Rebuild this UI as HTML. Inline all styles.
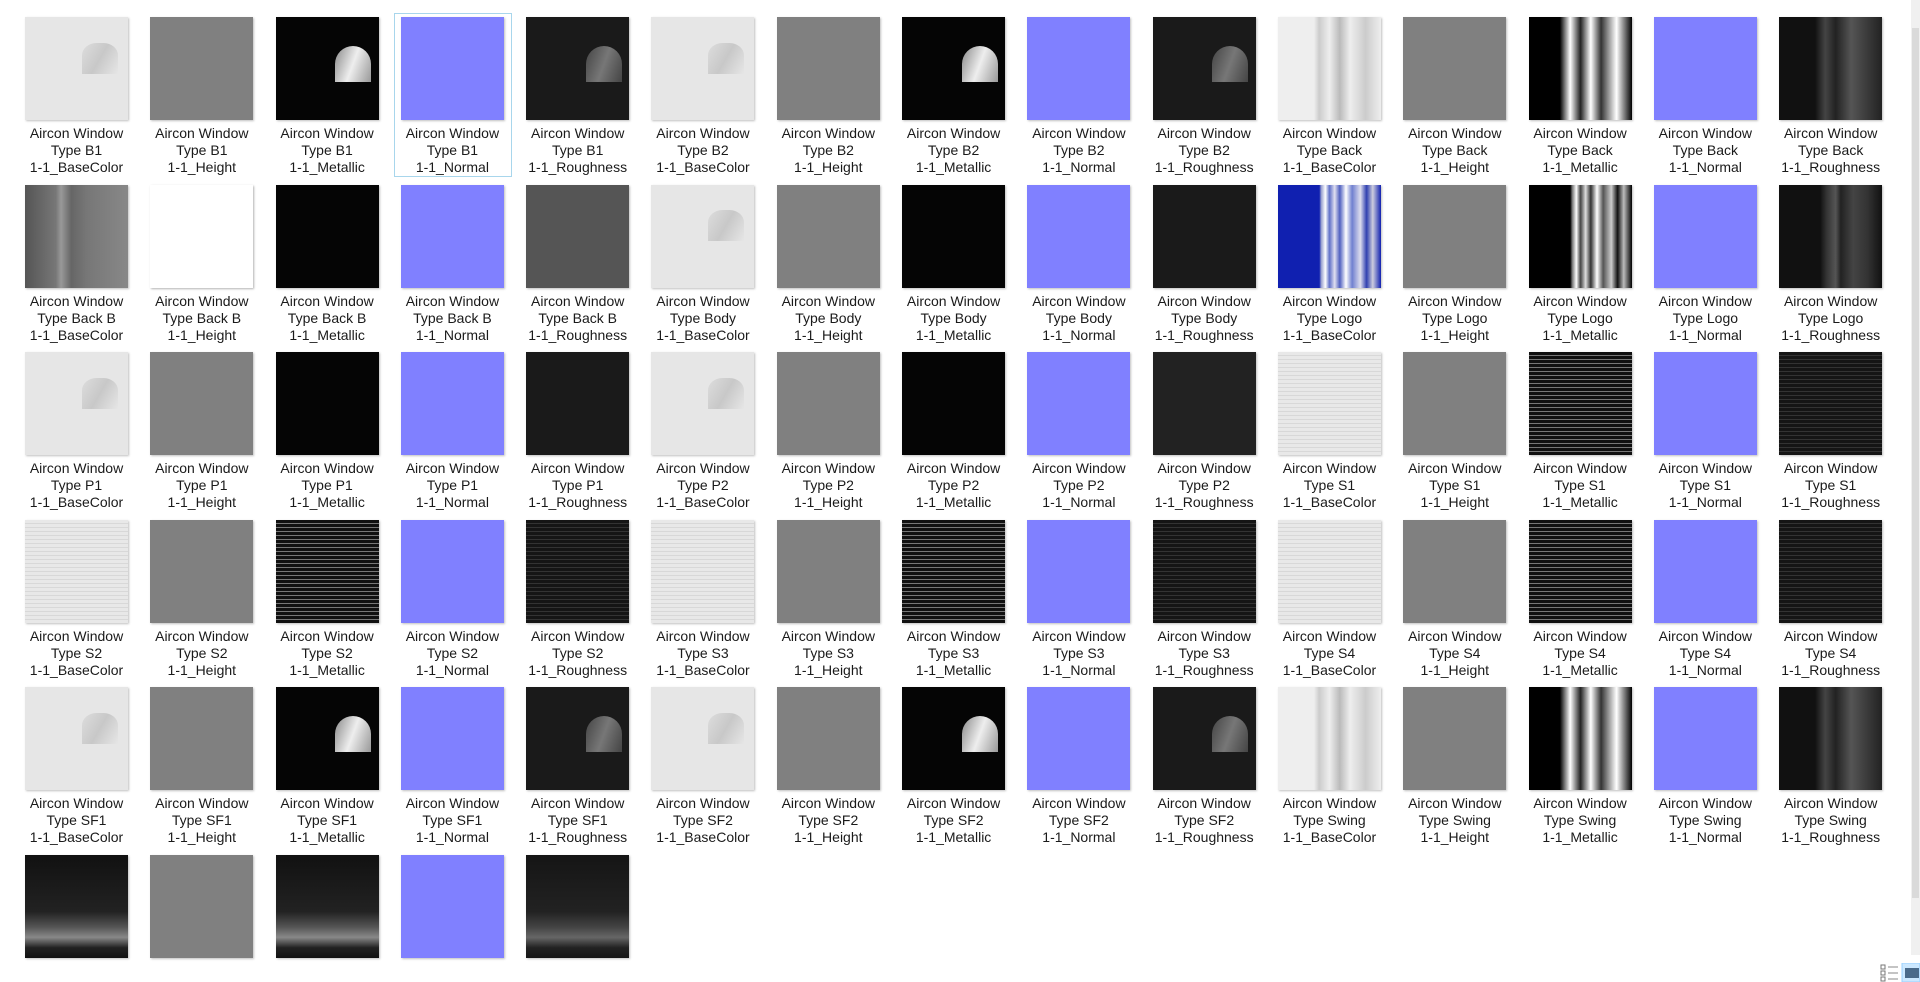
<!DOCTYPE html>
<html><head><meta charset="utf-8"><style>
html,body{margin:0;padding:0;background:#fff;width:1920px;height:982px;overflow:hidden;font-family:"Liberation Sans",sans-serif}
#wrap{position:absolute;left:0;top:0;width:1910px;height:965px;overflow:hidden}
.g{position:absolute;left:14px;top:17px;display:grid;grid-template-columns:repeat(15,125.3px);grid-auto-rows:167.5px}
.c{position:relative;text-align:center}
.t{position:absolute;left:11px;top:0;width:103px;height:103px;box-shadow:1px 1px 2px rgba(0,0,0,.25)}
.l{position:absolute;left:0;width:125px;top:108px;font-size:14px;line-height:17px;color:#1a1a1a;white-space:nowrap}
.bc{background:#e6e6e6}
.bc::after{content:"";position:absolute;left:55%;top:25%;width:35%;height:30%;background:linear-gradient(120deg,#ddd,#c8c8c8,#e6e6e6);border-radius:40% 40% 0 0}
.h{background:#808080}
.m{background:#050505}
.m.f::after{content:"";position:absolute;left:58%;top:28%;width:35%;height:35%;background:linear-gradient(110deg,#888,#eee,#999);border-radius:50% 50% 0 0}
.n{background:#8080ff}
.r{background:#1a1a1a}
.r.f::after{content:"";position:absolute;left:58%;top:28%;width:35%;height:35%;background:linear-gradient(110deg,#444,#777,#444);border-radius:50% 50% 0 0}
.sb{background:linear-gradient(90deg,#555 0,#777 30%,#999 35%,#666 45%,#777 60%,#888 100%)}
.w{background:#fff;box-shadow:1px 1px 2px rgba(0,0,0,.3)}
.rb{background:#555}
.lb{background:linear-gradient(90deg,#1020b0 0,#1020b0 40%,#99a0d0 42%,#fff 46%,#6070c8 50%,#e0e0f0 55%,#5060c0 60%,#fff 66%,#7080d0 72%,#dde 80%,#3040b0 86%,#ccd 92%,#1020b0 100%)}
.lm{background:linear-gradient(90deg,#000 0,#000 40%,#777 42%,#fff 46%,#444 50%,#ddd 55%,#333 60%,#fff 66%,#555 72%,#ccc 80%,#111 86%,#bbb 92%,#000 100%)}
.lr{background:linear-gradient(90deg,#111 0,#111 40%,#333 46%,#555 55%,#222 60%,#444 72%,#333 86%,#111 100%)}
.s1b{background:repeating-linear-gradient(0deg,#e8e8e8 0,#e8e8e8 3px,#d8d8d8 3px,#d8d8d8 4px)}
.s1m{background:repeating-linear-gradient(0deg,#111 0,#111 3px,#777 3px,#777 4px)}
.s1r{background:repeating-linear-gradient(0deg,#151515 0,#151515 3px,#333 3px,#333 4px)}
.swb{background:linear-gradient(90deg,#eee 0,#eee 35%,#ccc 40%,#eee 50%,#bbb 60%,#eee 70%,#ccc 85%,#eee 100%)}
.swm{background:linear-gradient(90deg,#000 0,#000 30%,#fff 40%,#222 50%,#fff 60%,#333 70%,#fff 85%,#000 100%)}
.swr{background:linear-gradient(90deg,#111 0,#111 35%,#444 45%,#222 55%,#555 70%,#222 100%)}
.vb{background:linear-gradient(180deg,#111 0,#222 55%,#555 70%,#888 80%,#222 90%,#111 100%)}
.vr{background:linear-gradient(180deg,#151515 0,#222 55%,#444 70%,#666 80%,#222 90%,#151515 100%)}
#sel{position:absolute;left:394px;top:13px;width:118px;height:164px;border:1px solid #a8d6ec;box-sizing:border-box}
#scroll{position:absolute;left:1911px;top:0;width:9px;height:955px;background:#f0f0f0}
#thumb{position:absolute;left:1912px;top:28px;width:7px;height:870px;background:#dadada}
</style></head><body>
<div id="wrap">
<div id="sel"></div>
<div class="g">
<div class="c"><div class="t bc"></div><div class="l">Aircon Window<br>Type B1<br>1-1_BaseColor</div></div>
<div class="c"><div class="t h"></div><div class="l">Aircon Window<br>Type B1<br>1-1_Height</div></div>
<div class="c"><div class="t m f"></div><div class="l">Aircon Window<br>Type B1<br>1-1_Metallic</div></div>
<div class="c"><div class="t n"></div><div class="l">Aircon Window<br>Type B1<br>1-1_Normal</div></div>
<div class="c"><div class="t r f"></div><div class="l">Aircon Window<br>Type B1<br>1-1_Roughness</div></div>
<div class="c"><div class="t bc"></div><div class="l">Aircon Window<br>Type B2<br>1-1_BaseColor</div></div>
<div class="c"><div class="t h"></div><div class="l">Aircon Window<br>Type B2<br>1-1_Height</div></div>
<div class="c"><div class="t m f"></div><div class="l">Aircon Window<br>Type B2<br>1-1_Metallic</div></div>
<div class="c"><div class="t n"></div><div class="l">Aircon Window<br>Type B2<br>1-1_Normal</div></div>
<div class="c"><div class="t r f"></div><div class="l">Aircon Window<br>Type B2<br>1-1_Roughness</div></div>
<div class="c"><div class="t swb"></div><div class="l">Aircon Window<br>Type Back<br>1-1_BaseColor</div></div>
<div class="c"><div class="t h"></div><div class="l">Aircon Window<br>Type Back<br>1-1_Height</div></div>
<div class="c"><div class="t swm"></div><div class="l">Aircon Window<br>Type Back<br>1-1_Metallic</div></div>
<div class="c"><div class="t n"></div><div class="l">Aircon Window<br>Type Back<br>1-1_Normal</div></div>
<div class="c"><div class="t swr"></div><div class="l">Aircon Window<br>Type Back<br>1-1_Roughness</div></div>

<div class="c"><div class="t sb"></div><div class="l">Aircon Window<br>Type Back B<br>1-1_BaseColor</div></div>
<div class="c"><div class="t w"></div><div class="l">Aircon Window<br>Type Back B<br>1-1_Height</div></div>
<div class="c"><div class="t m"></div><div class="l">Aircon Window<br>Type Back B<br>1-1_Metallic</div></div>
<div class="c"><div class="t n"></div><div class="l">Aircon Window<br>Type Back B<br>1-1_Normal</div></div>
<div class="c"><div class="t rb"></div><div class="l">Aircon Window<br>Type Back B<br>1-1_Roughness</div></div>
<div class="c"><div class="t bc"></div><div class="l">Aircon Window<br>Type Body<br>1-1_BaseColor</div></div>
<div class="c"><div class="t h"></div><div class="l">Aircon Window<br>Type Body<br>1-1_Height</div></div>
<div class="c"><div class="t m"></div><div class="l">Aircon Window<br>Type Body<br>1-1_Metallic</div></div>
<div class="c"><div class="t n"></div><div class="l">Aircon Window<br>Type Body<br>1-1_Normal</div></div>
<div class="c"><div class="t r"></div><div class="l">Aircon Window<br>Type Body<br>1-1_Roughness</div></div>
<div class="c"><div class="t lb"></div><div class="l">Aircon Window<br>Type Logo<br>1-1_BaseColor</div></div>
<div class="c"><div class="t h"></div><div class="l">Aircon Window<br>Type Logo<br>1-1_Height</div></div>
<div class="c"><div class="t lm"></div><div class="l">Aircon Window<br>Type Logo<br>1-1_Metallic</div></div>
<div class="c"><div class="t n"></div><div class="l">Aircon Window<br>Type Logo<br>1-1_Normal</div></div>
<div class="c"><div class="t lr"></div><div class="l">Aircon Window<br>Type Logo<br>1-1_Roughness</div></div>

<div class="c"><div class="t bc"></div><div class="l">Aircon Window<br>Type P1<br>1-1_BaseColor</div></div>
<div class="c"><div class="t h"></div><div class="l">Aircon Window<br>Type P1<br>1-1_Height</div></div>
<div class="c"><div class="t m"></div><div class="l">Aircon Window<br>Type P1<br>1-1_Metallic</div></div>
<div class="c"><div class="t n"></div><div class="l">Aircon Window<br>Type P1<br>1-1_Normal</div></div>
<div class="c"><div class="t r"></div><div class="l">Aircon Window<br>Type P1<br>1-1_Roughness</div></div>
<div class="c"><div class="t bc"></div><div class="l">Aircon Window<br>Type P2<br>1-1_BaseColor</div></div>
<div class="c"><div class="t h"></div><div class="l">Aircon Window<br>Type P2<br>1-1_Height</div></div>
<div class="c"><div class="t m"></div><div class="l">Aircon Window<br>Type P2<br>1-1_Metallic</div></div>
<div class="c"><div class="t n"></div><div class="l">Aircon Window<br>Type P2<br>1-1_Normal</div></div>
<div class="c"><div class="t r" style="background:#222"></div><div class="l">Aircon Window<br>Type P2<br>1-1_Roughness</div></div>
<div class="c"><div class="t s1b"></div><div class="l">Aircon Window<br>Type S1<br>1-1_BaseColor</div></div>
<div class="c"><div class="t h"></div><div class="l">Aircon Window<br>Type S1<br>1-1_Height</div></div>
<div class="c"><div class="t s1m"></div><div class="l">Aircon Window<br>Type S1<br>1-1_Metallic</div></div>
<div class="c"><div class="t n"></div><div class="l">Aircon Window<br>Type S1<br>1-1_Normal</div></div>
<div class="c"><div class="t s1r"></div><div class="l">Aircon Window<br>Type S1<br>1-1_Roughness</div></div>

<div class="c"><div class="t s1b"></div><div class="l">Aircon Window<br>Type S2<br>1-1_BaseColor</div></div>
<div class="c"><div class="t h"></div><div class="l">Aircon Window<br>Type S2<br>1-1_Height</div></div>
<div class="c"><div class="t s1m"></div><div class="l">Aircon Window<br>Type S2<br>1-1_Metallic</div></div>
<div class="c"><div class="t n"></div><div class="l">Aircon Window<br>Type S2<br>1-1_Normal</div></div>
<div class="c"><div class="t s1r"></div><div class="l">Aircon Window<br>Type S2<br>1-1_Roughness</div></div>
<div class="c"><div class="t s1b"></div><div class="l">Aircon Window<br>Type S3<br>1-1_BaseColor</div></div>
<div class="c"><div class="t h"></div><div class="l">Aircon Window<br>Type S3<br>1-1_Height</div></div>
<div class="c"><div class="t s1m"></div><div class="l">Aircon Window<br>Type S3<br>1-1_Metallic</div></div>
<div class="c"><div class="t n"></div><div class="l">Aircon Window<br>Type S3<br>1-1_Normal</div></div>
<div class="c"><div class="t s1r"></div><div class="l">Aircon Window<br>Type S3<br>1-1_Roughness</div></div>
<div class="c"><div class="t s1b"></div><div class="l">Aircon Window<br>Type S4<br>1-1_BaseColor</div></div>
<div class="c"><div class="t h"></div><div class="l">Aircon Window<br>Type S4<br>1-1_Height</div></div>
<div class="c"><div class="t s1m"></div><div class="l">Aircon Window<br>Type S4<br>1-1_Metallic</div></div>
<div class="c"><div class="t n"></div><div class="l">Aircon Window<br>Type S4<br>1-1_Normal</div></div>
<div class="c"><div class="t s1r"></div><div class="l">Aircon Window<br>Type S4<br>1-1_Roughness</div></div>

<div class="c"><div class="t bc"></div><div class="l">Aircon Window<br>Type SF1<br>1-1_BaseColor</div></div>
<div class="c"><div class="t h"></div><div class="l">Aircon Window<br>Type SF1<br>1-1_Height</div></div>
<div class="c"><div class="t m f"></div><div class="l">Aircon Window<br>Type SF1<br>1-1_Metallic</div></div>
<div class="c"><div class="t n"></div><div class="l">Aircon Window<br>Type SF1<br>1-1_Normal</div></div>
<div class="c"><div class="t r f"></div><div class="l">Aircon Window<br>Type SF1<br>1-1_Roughness</div></div>
<div class="c"><div class="t bc"></div><div class="l">Aircon Window<br>Type SF2<br>1-1_BaseColor</div></div>
<div class="c"><div class="t h"></div><div class="l">Aircon Window<br>Type SF2<br>1-1_Height</div></div>
<div class="c"><div class="t m f"></div><div class="l">Aircon Window<br>Type SF2<br>1-1_Metallic</div></div>
<div class="c"><div class="t n"></div><div class="l">Aircon Window<br>Type SF2<br>1-1_Normal</div></div>
<div class="c"><div class="t r f"></div><div class="l">Aircon Window<br>Type SF2<br>1-1_Roughness</div></div>
<div class="c"><div class="t swb"></div><div class="l">Aircon Window<br>Type Swing<br>1-1_BaseColor</div></div>
<div class="c"><div class="t h"></div><div class="l">Aircon Window<br>Type Swing<br>1-1_Height</div></div>
<div class="c"><div class="t swm"></div><div class="l">Aircon Window<br>Type Swing<br>1-1_Metallic</div></div>
<div class="c"><div class="t n"></div><div class="l">Aircon Window<br>Type Swing<br>1-1_Normal</div></div>
<div class="c"><div class="t swr"></div><div class="l">Aircon Window<br>Type Swing<br>1-1_Roughness</div></div>

<div class="c"><div class="t vb"></div><div class="l">Aircon Window</div></div>
<div class="c"><div class="t h"></div><div class="l">Aircon Window</div></div>
<div class="c"><div class="t vb"></div><div class="l">Aircon Window</div></div>
<div class="c"><div class="t n"></div><div class="l">Aircon Window</div></div>
<div class="c"><div class="t vr"></div><div class="l">Aircon Window</div></div>
</div>
</div>
<div id="scroll"></div><div id="thumb"></div>
<svg style="position:absolute;left:1880px;top:963px" width="40" height="19">
<rect x="1" y="2" width="4" height="4" fill="none" stroke="#777"/><rect x="1" y="8" width="4" height="4" fill="none" stroke="#777"/><rect x="1" y="14" width="4" height="4" fill="none" stroke="#777"/>
<line x1="8" y1="4" x2="18" y2="4" stroke="#888"/><line x1="8" y1="10" x2="18" y2="10" stroke="#888"/><line x1="8" y1="16" x2="18" y2="16" stroke="#888"/>
<rect x="22" y="0" width="18" height="19" fill="#cce8ff" stroke="#99d1ff"/><rect x="25" y="5" width="14" height="10" fill="#4a6a8a"/>
</svg>
</body></html>
